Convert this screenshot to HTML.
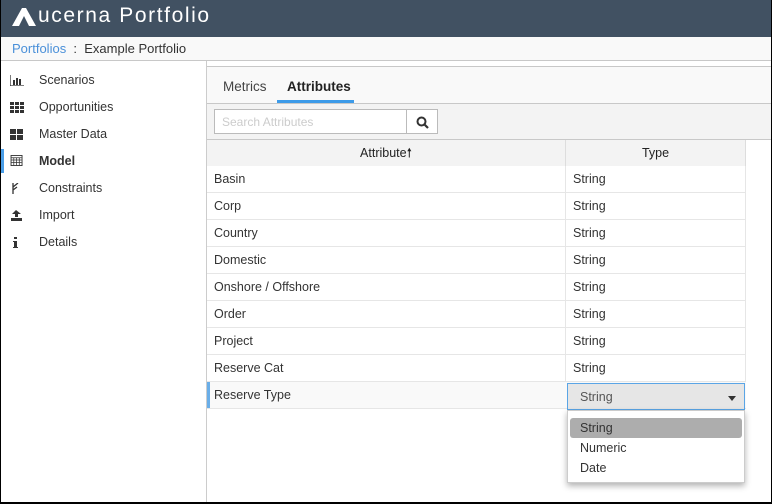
<!DOCTYPE html>
<html><head><style>
*{box-sizing:border-box;margin:0;padding:0}
body{width:772px;height:504px;overflow:hidden;font-family:"Liberation Sans",sans-serif;font-size:12.5px;color:#333;background:#fff;position:relative}
.frame{position:absolute;left:0;top:0;width:772px;height:504px;border-right:1px solid #000;border-bottom:2px solid #000;border-left:1px solid #000;pointer-events:none}
.hdr{position:absolute;left:0;top:0;width:772px;height:37px;background:#415162;color:#fff}
.hdr .t{position:absolute;left:38px;top:4px;font-size:21px;letter-spacing:1.6px}
.bc{position:absolute;left:0;top:37px;width:772px;height:24px;background:#f9f9f9;border-bottom:1px solid #c8c8c8;padding:4px 12px;font-size:13px}
.bc a{color:#4a90d9}
.side{position:absolute;left:0;top:61px;width:207px;height:443px;border-right:1px solid #ccc;background:#fff;padding-top:6px}
.it{height:27px;position:relative;padding-left:39px;line-height:27px;font-size:12.5px}
.it.sel{font-weight:bold}
.it.sel:after{content:"";position:absolute;left:1px;top:1px;width:205px;height:24px;background:#f3f3f3;z-index:-1}
.it.sel:before{content:"";position:absolute;left:1px;top:1px;width:3px;height:24px;background:#4a9ee8}
.ic{position:absolute;left:10px;top:8px;width:14px;height:11px}
.main{position:absolute;left:207px;top:66px;width:564px;height:438px;border-top:1px solid #c8c8c8}
.tabs{height:37px;background:#f9f9f9;border-bottom:1px solid #c8c8c8;position:relative}
.tab{position:absolute;top:12px;font-size:13.5px}
.ul{position:absolute;left:70px;top:33px;width:77px;height:3px;background:#3d9be9}
.srch{height:36px;background:#f3f3f3;border-bottom:1px solid #c8c8c8;position:relative}
.in{position:absolute;left:7px;top:5px;width:193px;height:25px;border:1px solid #bbb;background:#fff;color:#ccc;padding:5px 7px;font-size:12px}
.btn{position:absolute;left:199px;top:5px;width:32px;height:25px;border:1px solid #bbb;background:#fff}
.th{position:absolute;top:140px;left:207px;width:539px;height:26px;background:#f3f3f3}
.th span{position:absolute;top:0;line-height:26px;text-align:center;color:#222;height:26px;border-right:1px solid #ddd}
.r{position:absolute;left:207px;width:539px;height:27px;border-bottom:1px solid #e6e6e6;line-height:26px}
.r span{position:absolute;top:0;height:26px}
.r .a{left:0;width:359px;padding-left:7px;border-right:1px solid #e6e6e6}
.r .b{left:359px;width:180px;padding-left:7px;border-right:1px solid #e6e6e6}
.dd{position:absolute;left:567px;top:410px;width:178px;height:73px;background:#fff;border:1px solid #ccc;box-shadow:0 3px 6px rgba(0,0,0,.3)}
.dd div{height:20px;line-height:20px;padding:0 12px}
</style></head><body>
<div class="hdr"><svg style="position:absolute;left:12px;top:6px" width="28" height="20" viewBox="0 0 28 20"><path d="M0 20 L10 2 L14 2 L24 20 L17 20 L12 10 L7 20Z" fill="#fff"/></svg><div class="t">ucerna Portfolio</div></div>
<div class="bc"><a>Portfolios</a> &nbsp;:&nbsp; Example Portfolio</div>
<div class="side">
<div class="it"><svg class="ic" viewBox="0 0 14 11"><path d="M0 0V11H14" stroke="#333" fill="none" stroke-width="1.3"/><rect x="3" y="5" width="2" height="5" fill="#333"/><rect x="6" y="3" width="2" height="7" fill="#333"/><rect x="9" y="4" width="2" height="6" fill="#333"/></svg>Scenarios</div>
<div class="it"><svg class="ic" viewBox="0 0 14 11"><g fill="#333"><rect x="0" y="0" width="4" height="3"/><rect x="5" y="0" width="4" height="3"/><rect x="10" y="0" width="4" height="3"/><rect x="0" y="4" width="4" height="3"/><rect x="5" y="4" width="4" height="3"/><rect x="10" y="4" width="4" height="3"/><rect x="0" y="8" width="4" height="3"/><rect x="5" y="8" width="4" height="3"/><rect x="10" y="8" width="4" height="3"/></g></svg>Opportunities</div>
<div class="it"><svg class="ic" viewBox="0 0 14 11"><g fill="#333"><rect x="0" y="0" width="6" height="5"/><rect x="7" y="0" width="6" height="5"/><rect x="0" y="6" width="6" height="5"/><rect x="7" y="6" width="6" height="5"/></g></svg>Master Data</div>
<div class="it sel"><svg class="ic" style="top:7px" viewBox="0 0 14 12"><rect x="0.5" y="0.5" width="12" height="11" fill="none" stroke="#333"/><path d="M1 3H12M1 5.5H12M1 8H12M3.5 3V11M6.5 3V11M9.5 3V11" stroke="#333" stroke-width=".8"/></svg>Model</div>
<div class="it"><svg class="ic" viewBox="0 0 14 11"><path d="M3 0V11M3 4L8 0M3 7L7 4" stroke="#333" fill="none" stroke-width="1.3"/></svg>Constraints</div>
<div class="it"><svg class="ic" viewBox="0 0 14 11"><path d="M6 0L2 4H5V7H8V4H11Z M1 8H12V11H1Z" fill="#333"/></svg>Import</div>
<div class="it"><svg class="ic" viewBox="0 0 14 11"><rect x="4" y="0" width="3" height="2" fill="#333"/><path d="M3 4H7V10H8V11H3V10H4V5H3Z" fill="#333"/></svg>Details</div>
</div>
<div class="main">
<div class="tabs"><span class="tab" style="left:16px;color:#444">Metrics</span><span class="tab" style="left:80px;color:#222;font-weight:bold">Attributes</span><div class="ul"></div></div>
<div class="srch"><div class="in">Search Attributes</div><div class="btn"><svg style="position:absolute;left:9px;top:6px" width="13" height="13" viewBox="0 0 13 13"><circle cx="5.5" cy="5.5" r="4" fill="none" stroke="#333" stroke-width="2"/><path d="M8.5 8.5L12 12" stroke="#333" stroke-width="2.2"/></svg></div></div>
</div>
<div class="th"><span style="left:0;width:359px">Attribute🠕</span><span style="left:359px;width:180px">Type</span></div>
<div class="r" style="top:166px"><span class="a">Basin</span><span class="b">String</span></div>
<div class="r" style="top:193px"><span class="a">Corp</span><span class="b">String</span></div>
<div class="r" style="top:220px"><span class="a">Country</span><span class="b">String</span></div>
<div class="r" style="top:247px"><span class="a">Domestic</span><span class="b">String</span></div>
<div class="r" style="top:274px"><span class="a">Onshore / Offshore</span><span class="b">String</span></div>
<div class="r" style="top:301px"><span class="a">Order</span><span class="b">String</span></div>
<div class="r" style="top:328px"><span class="a">Project</span><span class="b">String</span></div>
<div class="r" style="top:355px"><span class="a">Reserve Cat</span><span class="b">String</span></div>
<div class="r" style="top:382px;background:#f9f9f9;box-shadow:inset 3px 0 #6aaee8"><span class="a" style="border-right:0">Reserve Type</span></div>
<div style="position:absolute;left:567px;top:383px;width:178px;height:27px;background:#e6e6e6;border:1px solid #5aa5e6;padding:0 12px;line-height:27px;color:#555">String<span style="position:absolute;right:8px;top:12px;border:4px solid transparent;border-top:5px solid #333;border-bottom:0"></span></div>
<div class="dd"><div style="margin:7px 2px 0;background:#adadad;border-radius:3px;padding:0 10px;color:#333">String</div><div>Numeric</div><div>Date</div></div>
<div class="frame"></div>
</body></html>
